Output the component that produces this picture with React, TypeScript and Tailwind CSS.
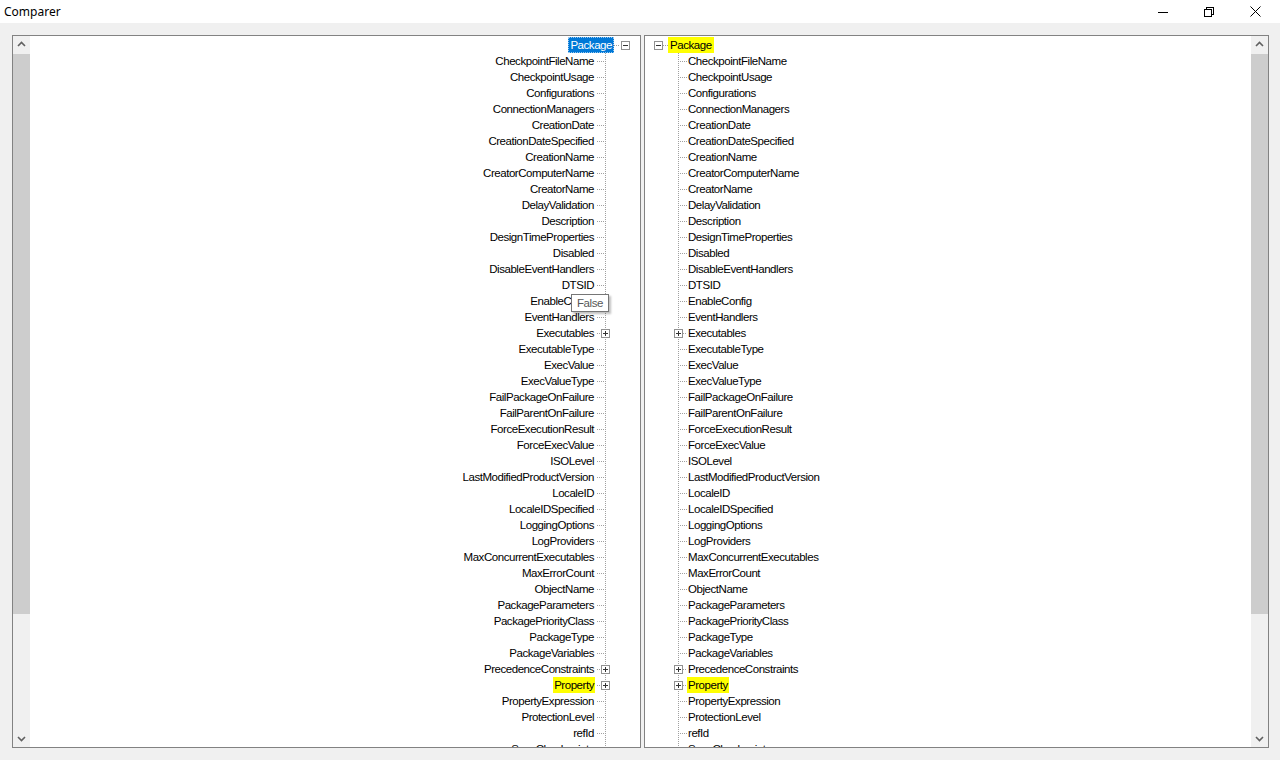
import React from "react";

type Node = { name: string; expandable?: boolean; highlight?: boolean };

const children: Node[] = [
  { name: "CheckpointFileName" },
  { name: "CheckpointUsage" },
  { name: "Configurations" },
  { name: "ConnectionManagers" },
  { name: "CreationDate" },
  { name: "CreationDateSpecified" },
  { name: "CreationName" },
  { name: "CreatorComputerName" },
  { name: "CreatorName" },
  { name: "DelayValidation" },
  { name: "Description" },
  { name: "DesignTimeProperties" },
  { name: "Disabled" },
  { name: "DisableEventHandlers" },
  { name: "DTSID" },
  { name: "EnableConfig" },
  { name: "EventHandlers" },
  { name: "Executables", expandable: true },
  { name: "ExecutableType" },
  { name: "ExecValue" },
  { name: "ExecValueType" },
  { name: "FailPackageOnFailure" },
  { name: "FailParentOnFailure" },
  { name: "ForceExecutionResult" },
  { name: "ForceExecValue" },
  { name: "ISOLevel" },
  { name: "LastModifiedProductVersion" },
  { name: "LocaleID" },
  { name: "LocaleIDSpecified" },
  { name: "LoggingOptions" },
  { name: "LogProviders" },
  { name: "MaxConcurrentExecutables" },
  { name: "MaxErrorCount" },
  { name: "ObjectName" },
  { name: "PackageParameters" },
  { name: "PackagePriorityClass" },
  { name: "PackageType" },
  { name: "PackageVariables" },
  { name: "PrecedenceConstraints", expandable: true },
  { name: "Property", expandable: true, highlight: true },
  { name: "PropertyExpression" },
  { name: "ProtectionLevel" },
  { name: "refId" },
  { name: "SaveCheckpoints" },
];

const font = "font-['Liberation_Sans',Arial,sans-serif] text-[11.5px] tracking-[-0.45px]";

// 9x9 plus/minus box, top-left at (x, 4)
const Expander = ({ x, open }: { x: number; open?: boolean }) => (
  <g shapeRendering="crispEdges">
    <rect x={x + 0.5} y={4.5} width={8} height={8} fill="#fff" stroke="#919191" />
    <line x1={x + 2} y1={8.5} x2={x + 7} y2={8.5} stroke="#333" />
    {!open && <line x1={x + 4.5} y1={6} x2={x + 4.5} y2={11} stroke="#333" />}
  </g>
);

const dots = { stroke: "#a0a0a0", strokeDasharray: "1 1", shapeRendering: "crispEdges" as const };

// right panel (normal tree)
const RightChildRow = ({ node }: { node: Node }) => (
  <div className="flex h-4 items-center">
    <div className="w-[28px] shrink-0" />
    <svg width="14" height="16" className="shrink-0">
      <line x1={5.5} y1={0} x2={5.5} y2={16} {...dots} />
      <line x1={node.expandable ? 10 : 7} y1={8.5} x2={14} y2={8.5} {...dots} />
      {node.expandable && <Expander x={1} />}
    </svg>
    <span className={`whitespace-nowrap px-px leading-4 text-black ${node.highlight ? "bg-[#ffff00]" : ""}`}>
      {node.name}
    </span>
  </div>
);

// left panel (mirrored tree)
const LeftChildRow = ({ node }: { node: Node }) => (
  <div className="flex h-4 items-center justify-end">
    <span className={`whitespace-nowrap px-px leading-4 text-black ${node.highlight ? "bg-[#ffff00]" : ""}`}>
      {node.name}
    </span>
    <svg width="16" height="16" className="shrink-0">
      <line x1={10.5} y1={0} x2={10.5} y2={16} {...dots} />
      <line x1={2} y1={8.5} x2={node.expandable ? 6 : 10} y2={8.5} {...dots} />
      {node.expandable && <Expander x={6} />}
    </svg>
    <div className="w-[29px] shrink-0" />
  </div>
);

const Chevron = ({ up }: { up?: boolean }) => (
  <svg width="17" height="17" viewBox="0 0 17 17">
    <path
      d={up ? "M5 10 L8.5 6.5 L12 10" : "M5 7 L8.5 10.5 L12 7"}
      fill="none"
      stroke="#606060"
      strokeWidth="1.6"
    />
  </svg>
);

const ScrollBar = () => (
  <div className="flex w-[17px] shrink-0 flex-col bg-[#f0f0f0]">
    <div className="h-[17px]">
      <Chevron up />
    </div>
    <div className="mt-px h-[560px] bg-[#cdcdcd]" />
    <div className="flex-1" />
    <div className="h-[17px]">
      <Chevron />
    </div>
  </div>
);

const LeftPanel = () => (
  <div className="flex h-[713px] w-[629px] border border-[#828282] bg-white">
    <ScrollBar />
    <div className={`relative flex-1 overflow-hidden pt-px ${font}`}>
      <div className="flex h-4 items-center justify-end">
        <span className="whitespace-nowrap bg-[#0078d7] px-[2px] leading-4 text-white outline outline-1 outline-dotted outline-[#99c9ef] -outline-offset-1">
          Package
        </span>
        <svg width="17" height="16" className="shrink-0">
          <line x1={0} y1={8.5} x2={6} y2={8.5} {...dots} />
          <Expander x={7} open />
        </svg>
        <div className="w-[9px] shrink-0" />
      </div>
      {children.map((n) => (
        <LeftChildRow key={n.name} node={n} />
      ))}
      <div className="absolute left-[541px] top-[258px] border border-[#767676] bg-white px-[5px] py-px leading-[14px] text-[#575757] shadow-[2px_2px_2px_rgba(0,0,0,0.25)]">
        False
      </div>
    </div>
  </div>
);

const RightPanel = () => (
  <div className="flex h-[713px] w-[625px] border border-[#828282] bg-white">
    <div className={`flex-1 overflow-hidden pt-px ${font}`}>
      <div className="flex h-4 items-center">
        <div className="w-[9px] shrink-0" />
        <svg width="14" height="16" className="shrink-0">
          <line x1={9} y1={8.5} x2={14} y2={8.5} {...dots} />
          <Expander x={0} open />
        </svg>
        <span className="whitespace-nowrap bg-[#ffff00] px-[2px] leading-4 text-black">Package</span>
      </div>
      {children.map((n) => (
        <RightChildRow key={n.name} node={n} />
      ))}
    </div>
    <ScrollBar />
  </div>
);

export default function App() {
  return (
    <div className="flex h-[760px] w-[1280px] flex-col overflow-hidden bg-[#f0f0f0]">
      <div className="flex h-[23px] shrink-0 items-center bg-white font-['Noto_Sans',sans-serif] text-[12px] text-black">
        <span className="pl-[4px]">Comparer</span>
        <div className="ml-auto mr-[2px] flex h-full items-center">
          <div className="flex w-[46px] justify-center">
            <svg width="10" height="10">
              <line x1={0} y1={5.5} x2={10} y2={5.5} stroke="#000" shapeRendering="crispEdges" />
            </svg>
          </div>
          <div className="flex w-[46px] justify-center">
            <svg width="10" height="10" shapeRendering="crispEdges">
              <rect x={0.5} y={2.5} width={7} height={7} fill="none" stroke="#000" />
              <path d="M2.5 2.5 V0.5 H9.5 V7.5 H7.5" fill="none" stroke="#000" />
            </svg>
          </div>
          <div className="flex w-[46px] justify-center">
            <svg width="11" height="11">
              <path d="M0.5 0.5 L10.5 10.5 M10.5 0.5 L0.5 10.5" stroke="#000" strokeWidth="1" />
            </svg>
          </div>
        </div>
      </div>
      <div className="flex gap-[3px] pl-[12px] pt-[12px]">
        <LeftPanel />
        <RightPanel />
      </div>
    </div>
  );
}
